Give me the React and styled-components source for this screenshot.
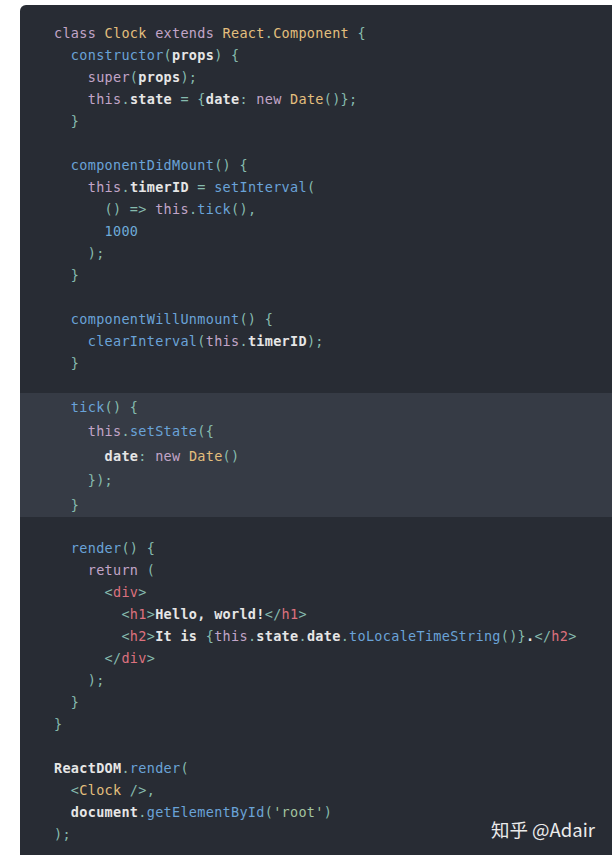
import React from "react";
import styled, { createGlobalStyle } from "styled-components";

const Global = createGlobalStyle`
  html, body { margin: 0; padding: 0; background: #ffffff; overflow: hidden; }
`;

const Page = styled.div`
  padding: 5px 0 0 20px;
`;

const Block = styled.div`
  position: relative;
  height: 850px;
  box-sizing: border-box;
  padding-top: 17px;
  background: #282c34;
  border-top-left-radius: 6px;
  font-family: "DejaVu Sans Mono", "Liberation Mono", monospace;
  font-size: 13.5px;
  letter-spacing: 0.3px;
  color: #d7dae0;
`;

const Section = styled.div`
  padding-left: 34px;
`;

const Highlight = styled.div`
  margin: 19px 0 20px;
  padding: 1.5px 0 0 34px;
  height: 124px;
  box-sizing: border-box;
  background: #363b45;
`;

const Line = styled.div`
  white-space: pre;
  height: ${(p) => (p.$tall ? "24.5px" : "22px")};
  line-height: ${(p) => (p.$tall ? "24.5px" : "22px")};
`;

const colors = {
  k: "#c2a5c8",
  c: "#e3bf7d",
  f: "#6aa3d8",
  p: "#86bbae",
  i: "#e6e6e6",
  t: "#dc717e",
  n: "#6eaad8",
  s: "#a3c59f",
  x: "#d7dae0",
};

const Tok = styled.span`
  color: ${(p) => colors[p.$k]};
  font-weight: ${(p) => (p.$k === "i" ? 700 : 400)};
`;

const Watermark = styled.div`
  position: absolute;
  right: 17px;
  bottom: 15px;
  font-family: "Noto Sans CJK SC", "Noto Sans", sans-serif;
  font-size: 18.5px;
  line-height: 22px;
  letter-spacing: 0;
  color: #ebebeb;
`;

const T = (k, s) => [k, s];

const part1 = [
  [T("k", "class "), T("c", "Clock "), T("k", "extends "), T("c", "React"), T("p", "."), T("c", "Component "), T("p", "{")],
  [T("x", "  "), T("f", "constructor"), T("p", "("), T("i", "props"), T("p", ") {")],
  [T("x", "    "), T("k", "super"), T("p", "("), T("i", "props"), T("p", ");")],
  [T("x", "    "), T("k", "this"), T("p", "."), T("i", "state"), T("p", " = {"), T("i", "date"), T("p", ": "), T("k", "new "), T("c", "Date"), T("p", "()};")],
  [T("x", "  "), T("p", "}")],
  [],
  [T("x", "  "), T("f", "componentDidMount"), T("p", "() {")],
  [T("x", "    "), T("k", "this"), T("p", "."), T("i", "timerID"), T("p", " = "), T("f", "setInterval"), T("p", "(")],
  [T("x", "      "), T("p", "() => "), T("k", "this"), T("p", "."), T("f", "tick"), T("p", "(),")],
  [T("x", "      "), T("n", "1000")],
  [T("x", "    "), T("p", ");")],
  [T("x", "  "), T("p", "}")],
  [],
  [T("x", "  "), T("f", "componentWillUnmount"), T("p", "() {")],
  [T("x", "    "), T("f", "clearInterval"), T("p", "("), T("k", "this"), T("p", "."), T("i", "timerID"), T("p", ");")],
  [T("x", "  "), T("p", "}")],
];

const part2 = [
  [T("x", "  "), T("f", "tick"), T("p", "() {")],
  [T("x", "    "), T("k", "this"), T("p", "."), T("f", "setState"), T("p", "({")],
  [T("x", "      "), T("i", "date"), T("p", ": "), T("k", "new "), T("c", "Date"), T("p", "()")],
  [T("x", "    "), T("p", "});")],
  [T("x", "  "), T("p", "}")],
];

const part3 = [
  [T("x", "  "), T("f", "render"), T("p", "() {")],
  [T("x", "    "), T("k", "return "), T("p", "(")],
  [T("x", "      "), T("p", "<"), T("t", "div"), T("p", ">")],
  [T("x", "        "), T("p", "<"), T("t", "h1"), T("p", ">"), T("i", "Hello, world!"), T("p", "</"), T("t", "h1"), T("p", ">")],
  [T("x", "        "), T("p", "<"), T("t", "h2"), T("p", ">"), T("i", "It is "), T("p", "{"), T("k", "this"), T("p", "."), T("i", "state"), T("p", "."), T("i", "date"), T("p", "."), T("f", "toLocaleTimeString"), T("p", "()}"), T("i", "."), T("p", "</"), T("t", "h2"), T("p", ">")],
  [T("x", "      "), T("p", "</"), T("t", "div"), T("p", ">")],
  [T("x", "    "), T("p", ");")],
  [T("x", "  "), T("p", "}")],
  [T("p", "}")],
  [],
  [T("i", "ReactDOM"), T("p", "."), T("f", "render"), T("p", "(")],
  [T("x", "  "), T("p", "<"), T("c", "Clock"), T("p", " />,")],
  [T("x", "  "), T("i", "document"), T("p", "."), T("f", "getElementById"), T("p", "("), T("s", "'root'"), T("p", ")")],
  [T("p", ");")],
];

const renderLines = (lines, tall) =>
  lines.map((toks, i) => (
    <Line key={i} $tall={tall}>
      {toks.length === 0
        ? " "
        : toks.map(([k, s], j) => (
            <Tok key={j} $k={k}>
              {s}
            </Tok>
          ))}
    </Line>
  ));

export default function App() {
  return (
    <>
      <Global />
      <Page>
        <Block>
          <Section>{renderLines(part1, false)}</Section>
          <Highlight>{renderLines(part2, true)}</Highlight>
          <Section>{renderLines(part3, false)}</Section>
          <Watermark>知乎 @Adair</Watermark>
        </Block>
      </Page>
    </>
  );
}
